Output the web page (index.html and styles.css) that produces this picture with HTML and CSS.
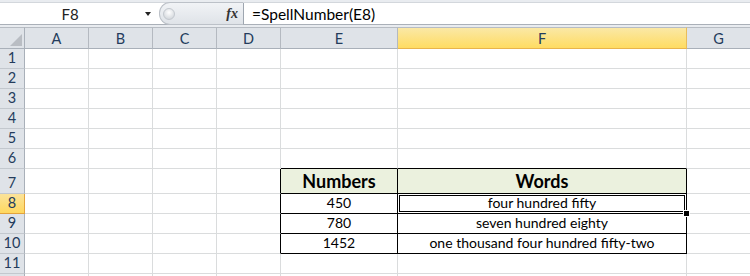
FILE: index.html
```html
<!DOCTYPE html>
<html>
<head>
<meta charset="utf-8">
<link rel="stylesheet" href="styles.css">
</head>
<body>
<div class="fbar">
  <div class="fbar-row">
    <div class="namebox"><span class="name">F8</span><span class="arrow-wrap"><span class="arrow"></span></span></div>
    <div class="splitter"><span class="knob"></span><span class="fx">fx</span></div>
    <div class="formula">=SpellNumber(E8)</div>
  </div>
</div>
<div class="grid">
  <div class="corner"><svg width="12" height="12" viewBox="0 0 12 12"><path d="M12 0 L12 12 L0 12 Z" fill="#b9bdc3"/></svg></div>
  <div class="ch">A</div><div class="ch">B</div><div class="ch">C</div><div class="ch">D</div><div class="ch">E</div><div class="ch sel">F</div><div class="ch">G</div>

  <div class="rh">1</div><div class="c"></div><div class="c"></div><div class="c"></div><div class="c"></div><div class="c"></div><div class="c"></div><div class="c"></div>
  <div class="rh">2</div><div class="c"></div><div class="c"></div><div class="c"></div><div class="c"></div><div class="c"></div><div class="c"></div><div class="c"></div>
  <div class="rh">3</div><div class="c"></div><div class="c"></div><div class="c"></div><div class="c"></div><div class="c"></div><div class="c"></div><div class="c"></div>
  <div class="rh">4</div><div class="c"></div><div class="c"></div><div class="c"></div><div class="c"></div><div class="c"></div><div class="c"></div><div class="c"></div>
  <div class="rh">5</div><div class="c"></div><div class="c"></div><div class="c"></div><div class="c"></div><div class="c"></div><div class="c"></div><div class="c"></div>
  <div class="rh">6</div><div class="c"></div><div class="c"></div><div class="c"></div><div class="c"></div><div class="c kb"></div><div class="c kb"></div><div class="c"></div>
  <div class="rh">7</div><div class="c"></div><div class="c"></div><div class="c"></div><div class="c kr"></div><div class="c kr kb th">Numbers</div><div class="c kr kb th">Words</div><div class="c"></div>
  <div class="rh sel">8</div><div class="c"></div><div class="c"></div><div class="c"></div><div class="c kr"></div><div class="c kr kb">450</div><div class="c kr kb active">four hundred fifty<span class="sel-box"></span><span class="handle"></span></div><div class="c"></div>
  <div class="rh">9</div><div class="c"></div><div class="c"></div><div class="c"></div><div class="c kr"></div><div class="c kr kb">780</div><div class="c kr kb">seven hundred eighty</div><div class="c"></div>
  <div class="rh">10</div><div class="c"></div><div class="c"></div><div class="c"></div><div class="c kr"></div><div class="c kr kb">1452</div><div class="c kr kb">one thousand four hundred fifty-two</div><div class="c"></div>
  <div class="rh">11</div><div class="c"></div><div class="c"></div><div class="c"></div><div class="c"></div><div class="c"></div><div class="c"></div><div class="c"></div>
  <div class="rh last"></div><div class="c last"></div><div class="c last"></div><div class="c last"></div><div class="c last"></div><div class="c last"></div><div class="c last"></div><div class="c last"></div>
</div>
</body>
</html>
```

FILE: styles.css
```css
* { box-sizing: border-box; margin: 0; padding: 0; }
html, body { width: 750px; height: 276px; overflow: hidden; background: #fff; }
body { font-family: Lato, "Liberation Sans", sans-serif; font-size: 14px; color: #000; }

.fbar { height: 27px; background: #e9ecf0; padding-top: 2px; }
.fbar-row {
  display: flex; height: 23px;
  border-top: 1px solid #d3d7dc; border-bottom: 1px solid #aab0b8;
  background: #fff;
}
.namebox { width: 159px; display: flex; align-items: center; }
.name { width: 140px; text-align: center; font-size: 15px; color: #222; }
.arrow-wrap { width: 19px; display: flex; justify-content: center; }
.arrow { width: 0; height: 0; border-left: 3.5px solid transparent; border-right: 3.5px solid transparent; border-top: 4px solid #222; margin-left: -4px; }
.splitter {
  width: 84px; display: flex; align-items: center; justify-content: space-between;
  background: linear-gradient(#f1f3f6, #dfe3e8);
  border: 1px solid #bcc1c8; border-right: none;
  border-radius: 11px 0 0 11px; margin-top: -1px; margin-bottom: -1px;
  padding: 0 5px 0 3px;
}
.knob {
  width: 12px; height: 12px; border-radius: 50%;
  background: radial-gradient(circle at 50% 35%, #ffffff, #c9ced4);
  border: 1px solid #c3c8ce;
}
.fx { font-family: "Liberation Serif", serif; font-style: italic; font-weight: bold; font-size: 14px; color: #333; }
.formula { flex: 1; border-left: 1px solid #9ea6b0; padding-left: 8px; display: flex; align-items: center; font-size: 15.5px; }

.grid {
  display: grid;
  grid-template-columns: 25px 64px 64px 64px 64px 117px 289px 64px;
  grid-template-rows: 22px repeat(6, 20px) 25px repeat(4, 20px) 2px;
}
.corner {
  background: #dfe3e8; border-top: 1px solid #b7bcc3; border-right: 1px solid #a9b0b9; border-bottom: 1px solid #a9b0b9;
  display: flex; align-items: flex-end; justify-content: flex-end; padding: 0 2px 2px 0;
}
.ch {
  background: #dfe3e8; border-top: 1px solid #b7bcc3; border-right: 1px solid #b4b9c0; border-bottom: 1px solid #a9b0b9;
  display: flex; align-items: center; justify-content: center; color: #243c5c; font-size: 14.5px; padding-top: 1px;
}
.ch.sel { background: linear-gradient(#fae8a6, #ffdc62); border-bottom-color: #e8b44c; border-right-color: #e9bd5a; }
.rh {
  background: #dfe3e8; border-right: 1px solid #a9b0b9; border-bottom: 1px solid #c3c8ce;
  display: flex; align-items: flex-end; justify-content: center; color: #243c5c; font-size: 14.5px; line-height: 16px; padding-bottom: 2px;
}
.rh.sel { background: linear-gradient(#fbe39a, #ffd85f); border-right-color: #e2a33c; border-bottom-color: #e2a33c; }
.c {
  border-right: 1px solid #dadcdd; border-bottom: 1px solid #dadcdd;
  display: flex; align-items: flex-end; justify-content: center; line-height: 16px; padding-bottom: 2px; white-space: nowrap;
}
.rh.last, .c.last { border-bottom: none; padding: 0; }
.c.kr { border-right-color: #000; }
.c.kb { border-bottom-color: #000; }
.c.th { background: #ebf1de; font-weight: bold; font-size: 18px; line-height: 20px; padding-bottom: 2px; }
.c.active { position: relative; }
.sel-box { position: absolute; left: 1px; top: 1px; right: 1px; bottom: 1px; border: 1px solid #000; }
.handle { position: absolute; left: 285px; top: 16px; width: 7px; height: 7px; background: #000; border: 1px solid #fff; }
```
